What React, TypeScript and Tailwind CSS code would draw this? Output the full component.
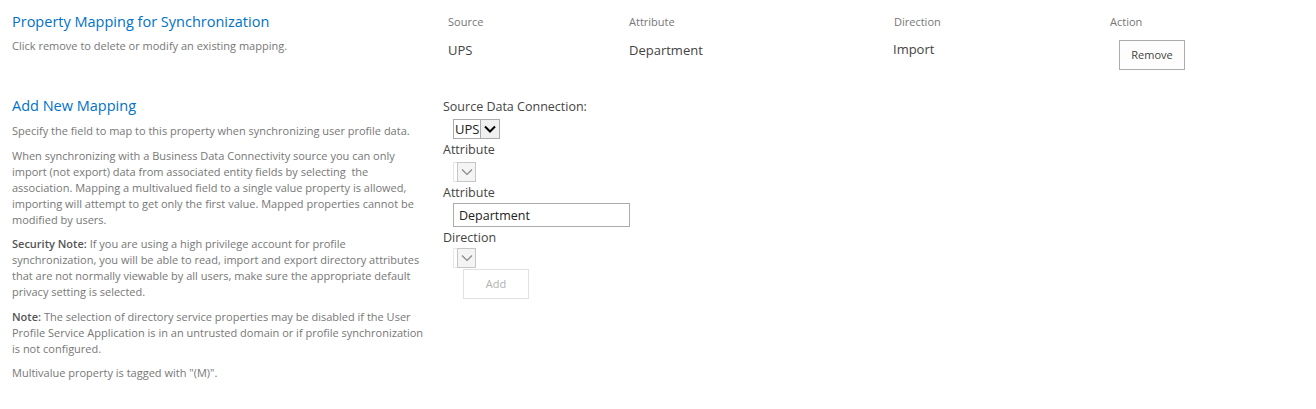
import React from "react";

const font = { fontFamily: '"Open Sans", "Noto Sans", sans-serif' };

function Chevron({ dark }: { dark?: boolean }) {
  return (
    <svg width="12" height="8" viewBox="0 0 12 8">
      <path
        d="M1 1.5 L6 6.5 L11 1.5"
        fill="none"
        stroke={dark ? "#000" : "#888"}
        strokeWidth={dark ? 2 : 1.2}
      />
    </svg>
  );
}

// fake select box, SharePoint style
function Select({ value, disabled }: { value?: string; disabled?: boolean }) {
  return (
    <div
      className={`flex h-[20px] items-stretch border ${
        disabled ? "border-[#e6e6e6]" : "border-[#ababab]"
      }`}
    >
      {value ? (
        <div className="flex items-center px-[1px] text-[13px] leading-none text-[#222]">{value}</div>
      ) : (
        <div className="w-[3px]" />
      )}
      <div
        className={`flex w-[19px] items-center justify-center border-l ${
          disabled ? "border-[#c6c6c6] bg-[#f4f4f4] border-y border-r -my-[1px] -mr-[1px]" : "border-[#ababab] bg-[#f0f0f0]"
        }`}
      >
        <Chevron dark={!disabled} />
      </div>
    </div>
  );
}

export default function App() {
  return (
    <div className="h-[409px] w-[1316px] bg-white text-[#444]" style={font}>
      {/* top section */}
      <div className="flex pt-[10px]">
        <div className="w-[443px] shrink-0 pl-[12px]">
          <h2 className="mt-[1px] text-[14.5px] leading-[22px] text-[#0072c6]">
            Property Mapping for Synchronization
          </h2>
          <p className="mt-[5px] text-[11px] leading-[16px] text-[#777]">
            Click remove to delete or modify an existing mapping.
          </p>
        </div>
        <div className="flex-1 pt-[4px]">
          <div className="flex text-[11px] leading-[16px] text-[#777]">
            <div className="w-[181px] pl-[5px]">Source</div>
            <div className="w-[265px] pl-[5px]">Attribute</div>
            <div className="w-[216px] pl-[5px]">Direction</div>
            <div className="pl-[5px]">Action</div>
          </div>
          <div className="mt-[10px] flex text-[13px] leading-[18px] text-[#444]">
            <div className="w-[181px] pl-[5px] pt-[1px]">UPS</div>
            <div className="w-[265px] pl-[5px] pt-[1px]">Department</div>
            <div className="w-[216px] pl-[4px]">Import</div>
            <div className="pl-[14px]">
              <button className="h-[30px] w-[66px] border border-[#ababab] bg-[#fdfdfd] text-[11px] text-[#444]">
                Remove
              </button>
            </div>
          </div>
        </div>
      </div>

      {/* add new mapping */}
      <div className="mt-[26px] flex">
        <div className="w-[443px] shrink-0 whitespace-nowrap pl-[12px] text-[11px] leading-[16px] text-[#777]">
          <h2 className="mb-[7px] text-[14.5px] leading-[20px] text-[#0072c6]">Add New Mapping</h2>
          <p className="mb-[9px]">
            Specify the field to map to this property when synchronizing user profile data.
          </p>
          <p className="mb-[8px]">
            When synchronizing with a Business Data Connectivity source you can only
            <br />
            import (not export) data from associated entity fields by selecting&nbsp; the
            <br />
            association. Mapping a multivalued field to a single value property is allowed,
            <br />
            importing will attempt to get only the first value. Mapped properties cannot be
            <br />
            modified by users.
          </p>
          <p className="mb-[9px]">
            <b className="font-semibold text-[#555]">Security Note:</b> If you are using a high
            privilege account for profile
            <br />
            synchronization, you will be able to read, import and export directory attributes
            <br />
            that are not normally viewable by all users, make sure the appropriate default
            <br />
            privacy setting is selected.
          </p>
          <p className="mb-[8px]">
            <b className="font-semibold text-[#555]">Note:</b> The selection of directory service
            properties may be disabled if the User
            <br />
            Profile Service Application is in an untrusted domain or if profile synchronization
            <br />
            is not configured.
          </p>
          <p>Multivalue property is tagged with "(M)".</p>
        </div>

        <div className="flex flex-col items-start text-[12.5px] leading-[18px] text-[#444]">
          <label className="mt-[2px]">Source Data Connection:</label>
          <div className="ml-[10px] mt-[3px]">
            <Select value="UPS" />
          </div>
          <label className="mt-[2px]">Attribute</label>
          <div className="ml-[10px] mt-[3px]">
            <Select disabled />
          </div>
          <label className="mt-[2px]">Attribute</label>
          <input
            readOnly
            value="Department"
            className="ml-[10px] mt-[1px] h-[24px] w-[177px] border border-[#ababab] px-[5px] text-[12.5px] text-[#222] outline-none"
          />
          <label className="mt-[2px]">Direction</label>
          <div className="ml-[10px] mt-[1px]">
            <Select disabled />
          </div>
          <button
            disabled
            className="ml-[20px] mt-[1px] h-[30px] w-[66px] border border-[#e1e1e1] bg-white text-[11px] text-[#b1b1b1]"
          >
            Add
          </button>
        </div>
      </div>
    </div>
  );
}
